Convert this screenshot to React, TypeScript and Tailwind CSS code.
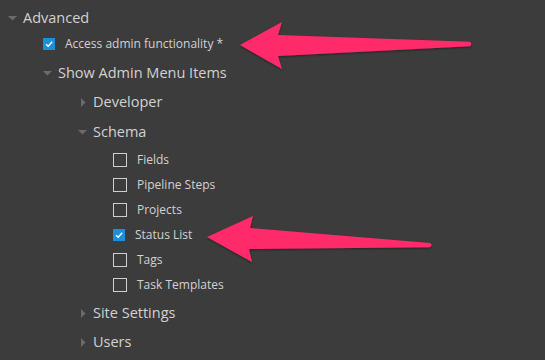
import React from "react";

const FONT = { fontFamily: "'Open Sans', 'Noto Sans', sans-serif" };

function Down() {
  return (
    <svg width="9" height="5" viewBox="0 0 9 5" className="block">
      <polygon points="0,0 9,0 4.5,4.5" fill="#6b6b6b" />
    </svg>
  );
}
function Right() {
  return (
    <svg width="5" height="9" viewBox="0 0 5 9" className="block">
      <polygon points="0,0 4.5,4.5 0,9" fill="#6b6b6b" />
    </svg>
  );
}

function Checked() {
  return (
    <div className="w-[12px] h-[12px] bg-[#1a8fda] flex items-center justify-center">
      <svg width="10" height="10" viewBox="0 0 10 10">
        <polyline points="2,5.2 4.2,7.3 8.2,2.8" fill="none" stroke="white" strokeWidth="1.4" />
      </svg>
    </div>
  );
}
function Unchecked() {
  return <div className="w-[14px] h-[14px] border border-[#cfcfcf]" />;
}

function Check({ label, checked, pl, mt }: { label: string; checked?: boolean; pl: string; mt: string }) {
  return (
    <div className={`flex items-center h-[20px] ${pl} ${mt}`}>
      {checked ? <Checked /> : <Unchecked />}
      <span className="ml-[10px] text-[12px] text-[#d2d2d2]">{label}</span>
    </div>
  );
}

export default function App() {
  return (
    <div className="relative w-[545px] h-[360px] bg-[#3c3c3c] overflow-hidden" style={FONT}>
      <div className="flex flex-col">
        <div className="flex items-center h-[24px] pl-[8px] mt-[6px]">
          <Down />
          <span className="ml-[6px] text-[14.5px] text-[#d2d2d2]">Advanced</span>
        </div>
        <Check label="Access admin functionality *" checked pl="pl-[43px]" mt="mt-[4px]" />
        <div className="flex items-center h-[24px] pl-[43px] mt-[7px]">
          <Down />
          <span className="ml-[6px] text-[14.5px] text-[#d2d2d2]">Show Admin Menu Items</span>
        </div>
        <div className="flex items-center h-[24px] pl-[81px] mt-[5px]">
          <Right />
          <span className="ml-[7px] text-[14.5px] text-[#d2d2d2]">Developer</span>
        </div>
        <div className="flex items-center h-[24px] pl-[78px] mt-[6px]">
          <Down />
          <span className="ml-[6px] text-[14.5px] text-[#d2d2d2]">Schema</span>
        </div>
        <Check label="Fields" pl="pl-[113px]" mt="mt-[6px]" />
        <Check label="Pipeline Steps" pl="pl-[113px]" mt="mt-[5px]" />
        <Check label="Projects" pl="pl-[113px]" mt="mt-[5px]" />
        <Check label="Status List" checked pl="pl-[113px]" mt="mt-[5px]" />
        <Check label="Tags" pl="pl-[113px]" mt="mt-[5px]" />
        <Check label="Task Templates" pl="pl-[113px]" mt="mt-[5px]" />
        <div className="flex items-center h-[24px] pl-[81px] mt-[6px]">
          <Right />
          <span className="ml-[7px] text-[14.5px] text-[#d2d2d2]">Site Settings</span>
        </div>
        <div className="flex items-center h-[24px] pl-[81px] mt-[5px]">
          <Right />
          <span className="ml-[7px] text-[14.5px] text-[#d2d2d2]">Users</span>
        </div>
      </div>

      <svg className="absolute inset-0 pointer-events-none" width="545" height="360" viewBox="0 0 545 360">
        <defs>
          <filter id="sh" x="-10%" y="-50%" width="120%" height="200%">
            <feDropShadow dx="0" dy="1" stdDeviation="1" floodColor="#000" floodOpacity="0.45" />
          </filter>
        </defs>
        <path
          d="M240,45 L282,22 L278,35 L470,41.8 Q472.5,44 470,46.2 L278,56 L282,69 Z"
          fill="#fe2b6b"
          filter="url(#sh)"
        />
        <path
          d="M207,237 L253,216 L250,228 L430,243 Q433,245 430,247.2 L249,249 L252,262 Z"
          fill="#fe2b6b"
          filter="url(#sh)"
        />
      </svg>
    </div>
  );
}
